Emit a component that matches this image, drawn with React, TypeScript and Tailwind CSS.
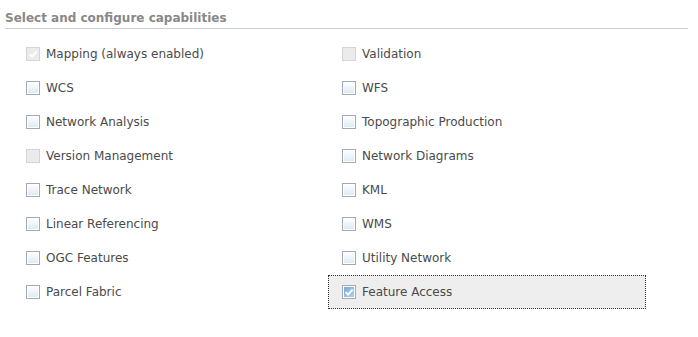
import React from 'react';

type Item = { label: string; state: 'off' | 'on' | 'disabled' | 'disabledOn'; focus?: boolean };

const LEFT: Item[] = [
  { label: 'Mapping (always enabled)', state: 'disabledOn' },
  { label: 'WCS', state: 'off' },
  { label: 'Network Analysis', state: 'off' },
  { label: 'Version Management', state: 'disabled' },
  { label: 'Trace Network', state: 'off' },
  { label: 'Linear Referencing', state: 'off' },
  { label: 'OGC Features', state: 'off' },
  { label: 'Parcel Fabric', state: 'off' },
];

const RIGHT: Item[] = [
  { label: 'Validation', state: 'disabled' },
  { label: 'WFS', state: 'off' },
  { label: 'Topographic Production', state: 'off' },
  { label: 'Network Diagrams', state: 'off' },
  { label: 'KML', state: 'off' },
  { label: 'WMS', state: 'off' },
  { label: 'Utility Network', state: 'off' },
  { label: 'Feature Access', state: 'on', focus: true },
];

function Box({ state }: { state: Item['state'] }) {
  const disabled = state === 'disabled' || state === 'disabledOn';
  let cls = 'border-[#a3aab5] bg-gradient-to-b from-[#ffffff] to-[#dce8f3] shadow-[inset_0_0_0_1px_#ffffff]';
  if (disabled) cls = 'border-[#d4d4d4] bg-[#ebebeb]';
  if (state === 'on') cls = 'border-[#a3aab5] bg-gradient-to-br from-[#6fa6dc] to-[#b8d4ef] shadow-[inset_0_0_0_1px_#ffffff]';
  return (
    <span className={'relative w-[14px] h-[14px] shrink-0 border ' + cls}>
      {(state === 'on' || state === 'disabledOn') && (
        <svg viewBox="0 0 12 12" className="absolute left-0 top-0 w-[12px] h-[12px]">
          <path d="M2.6 6.2 L5 8.6 L9.6 3.6" fill="none" stroke="#ffffff" strokeWidth="1.9" />
        </svg>
      )}
    </span>
  );
}

function Row({ item }: { item: Item }) {
  return (
    <div
      className={
        'flex items-center h-[34px] pl-[13px] border ' +
        (item.focus ? 'border-dotted border-[#333] bg-[#eeeeee]' : 'border-transparent')
      }
    >
      <Box state={item.state} />
      <span className="ml-[6px] text-[12px] text-[#4a4a4a]">{item.label}</span>
    </div>
  );
}

export default function App() {
  return (
    <div className="w-[698px] h-[337px] bg-white font-['DejaVu_Sans',Verdana,sans-serif]">
      <div className="pt-[10px] pl-[5px] pr-[10px]">
        <h2 className="text-[12px] font-bold text-[#888888] leading-[17px] pb-[1px] border-b border-[#cccccc]">
          Select and configure capabilities
        </h2>
      </div>
      <div className="grid grid-cols-[316px_318px] pl-[12px] pt-[8px]">
        <div className="flex flex-col">
          {LEFT.map((i) => (
            <Row key={i.label} item={i} />
          ))}
        </div>
        <div className="flex flex-col">
          {RIGHT.map((i) => (
            <Row key={i.label} item={i} />
          ))}
        </div>
      </div>
    </div>
  );
}
